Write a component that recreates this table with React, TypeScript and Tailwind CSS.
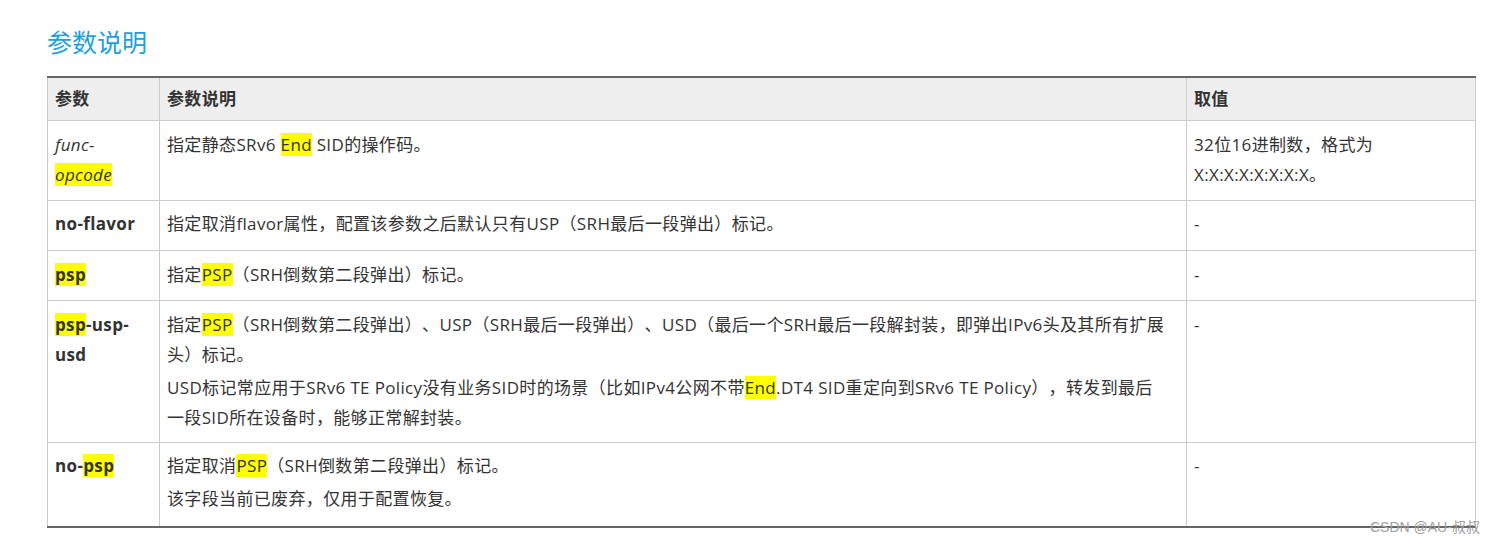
import React from "react";

const HL = ({ children }: { children: React.ReactNode }) => (
  <span className="bg-[#ffff00]">{children}</span>
);

const cell = "border-x border-[#cccccc] px-[7px] align-top";

export default function App() {
  return (
    <div
      className="w-[1493px] h-[544px] bg-white relative overflow-hidden text-[#333333] [text-spacing-trim:space-all]"
      style={{ fontFamily: '"Open Sans", "Noto Sans CJK SC", sans-serif' }}
    >
      <div className="pl-[47px] pr-[18px]">
        <h2 className="text-[25px] leading-[32px] text-[#1f9fde] pt-[26px] pb-[18px] font-normal">参数说明</h2>
        <table className="w-[1428px] table-fixed border-collapse text-[17px] leading-[30px] tracking-[0.35px] border-t-2 border-b-2 border-t-[#666666] border-b-[#666666]">
          <colgroup>
            <col className="w-[112px]" />
            <col className="w-[1027px]" />
            <col className="w-[289px]" />
          </colgroup>
          <thead>
            <tr className="bg-[#eeeeee] h-[43px]">
              <th className="border-x border-[#cccccc] text-left font-bold px-[7px] align-middle">参数</th>
              <th className="border-x border-[#cccccc] text-left font-bold px-[7px] align-middle">参数说明</th>
              <th className="border-x border-[#cccccc] text-left font-bold px-[7px] align-middle">取值</th>
            </tr>
          </thead>
          <tbody>
            <tr className="border-t border-[#cccccc]">
              <td className={`${cell} pt-[9px] pb-[10px] italic`}>
                func-
                <br />
                <HL>opcode</HL>
              </td>
              <td className={`${cell} pt-[9px] pb-[10px]`}>
                指定静态SRv6 <HL>End</HL> SID的操作码。
              </td>
              <td className={`${cell} pt-[9px] pb-[10px]`}>
                32位16进制数，格式为
                <br />
                X:X:X:X:X:X:X:X。
              </td>
            </tr>
            <tr className="border-t border-[#cccccc]">
              <td className={`${cell} pt-[8px] pb-[11px] font-bold`}>no-flavor</td>
              <td className={`${cell} pt-[8px] pb-[11px]`}>
                指定取消flavor属性，配置该参数之后默认只有USP（SRH最后一段弹出）标记。
              </td>
              <td className={`${cell} pt-[8px] pb-[11px]`}>-</td>
            </tr>
            <tr className="border-t border-[#cccccc]">
              <td className={`${cell} pt-[9px] pb-[10px] font-bold`}>
                <HL>psp</HL>
              </td>
              <td className={`${cell} pt-[9px] pb-[10px]`}>
                指定<HL>PSP</HL>（SRH倒数第二段弹出）标记。
              </td>
              <td className={`${cell} pt-[9px] pb-[10px]`}>-</td>
            </tr>
            <tr className="border-t border-[#cccccc]">
              <td className={`${cell} pt-[9px] pb-[9px] font-bold`}>
                <HL>psp</HL>-usp-
                <br />
                usd
              </td>
              <td className={`${cell} pt-[9px] pb-[9px]`}>
                <p className="mb-[3px]">
                  指定<HL>PSP</HL>（SRH倒数第二段弹出）、USP（SRH最后一段弹出）、USD（最后一个SRH最后一段解封装，即弹出IPv6头及其所有扩展头）标记。
                </p>
                <p>
                  USD标记常应用于SRv6 TE Policy没有业务SID时的场景（比如IPv4公网不带<HL>End</HL>.DT4 SID重定向到SRv6 TE Policy），转发到最后
                  <br />
                  一段SID所在设备时，能够正常解封装。
                </p>
              </td>
              <td className={`${cell} pt-[9px] pb-[9px]`}>-</td>
            </tr>
            <tr className="border-t border-[#cccccc]">
              <td className={`${cell} pt-[8px] pb-[12px] font-bold`}>
                no-<HL>psp</HL>
              </td>
              <td className={`${cell} pt-[8px] pb-[12px]`}>
                <p className="mb-[3px]">
                  指定取消<HL>PSP</HL>（SRH倒数第二段弹出）标记。
                </p>
                <p>该字段当前已废弃，仅用于配置恢复。</p>
              </td>
              <td className={`${cell} pt-[8px] pb-[12px]`}>-</td>
            </tr>
          </tbody>
        </table>
      </div>
      <div
        className="absolute left-[1370px] top-[519px] text-[14px] leading-[16px] text-[#a0a0a0]"
        style={{ fontFamily: '"Liberation Sans", "Noto Sans CJK SC", sans-serif' }}
      >
        CSDN @AU-叔叔
      </div>
    </div>
  );
}
